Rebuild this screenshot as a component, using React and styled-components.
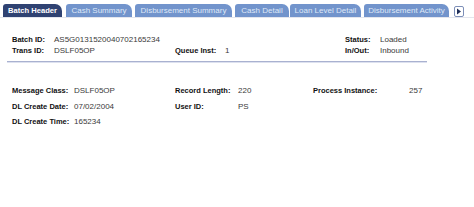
import React from "react";
import styled, { createGlobalStyle } from "styled-components";

const Global = createGlobalStyle`
  html, body { margin: 0; padding: 0; background: #ffffff; }
  body { font-family: "Liberation Sans", Arial, sans-serif; }
`;

const Page = styled.div`
  width: 474px;
  height: 207px;
  background: #fff;
  overflow: hidden;
`;

const TabBar = styled.div`
  display: flex;
  align-items: flex-end;
  padding: 4px 0 0 3px;
  height: 13px;
  border-bottom: 1px solid #e4e6ee;
`;

const Tab = styled.div`
  flex: none;
  width: ${(p) => p.$w}px;
  margin-right: ${(p) => p.$gap}px;
  height: 13px;
  box-sizing: border-box;
  display: flex;
  align-items: center;
  justify-content: center;
  border-radius: 3px 7px 0 0;
  background: ${(p) => (p.$active ? "#2f4272" : "#7294cc")};
  color: ${(p) => (p.$active ? "#ffffff" : "#dfe8f7")};
  font-size: ${(p) => (p.$active ? "7.6px" : "8px")};
  font-weight: ${(p) => (p.$active ? 700 : 400)};
  white-space: nowrap;
`;

const ArrowBtn = styled.div`
  flex: none;
  width: 10px;
  height: 11px;
  margin-left: 2px;
  box-sizing: border-box;
  border: 1px solid #7d8fb8;
  border-radius: 2px;
  background: #fff;
  display: flex;
  align-items: center;
  justify-content: center;
`;

const Grid = styled.div`
  display: grid;
  grid-template-columns: ${(p) => p.$cols};
  grid-template-rows: ${(p) => p.$rows};
  padding-left: 12px;
  align-items: center;
  margin-top: ${(p) => p.$top}px;
`;

const Label = styled.div`
  font-size: 7.5px;
  font-weight: 700;
  color: #111;
  white-space: nowrap;
`;

const Value = styled.div`
  font-size: 8px;
  color: #3a3a3a;
  white-space: nowrap;
`;

const Empty = styled.div``;

const Separator = styled.div`
  margin: 5px 0 0 7px;
  width: 420px;
  height: 1px;
  background: #a9b1d0;
  box-shadow: 0 1px 0 #dde1ef;
`;

const tabs = [
  ["Batch Header", 59, 4, true],
  ["Cash Summary", 66, 3],
  ["Disbursement Summary", 97, 3],
  ["Cash Detail", 54, 1],
  ["Loan Level Detail", 71, 3],
  ["Disbursement Activity", 85, 3],
];

export default function App() {
  return (
    <Page>
      <Global />
      <TabBar>
        {tabs.map(([t, w, g, a]) => (
          <Tab key={t} $w={w} $gap={g} $active={a}>
            {t}
          </Tab>
        ))}
        <ArrowBtn>
          <svg width="6" height="7" viewBox="0 0 6 7">
            <path d="M1 0.5 L5 3.5 L1 6.5 Z" fill="#1f2f5a" />
          </svg>
        </ArrowBtn>
      </TabBar>

      <Grid $cols="42px 121px 50px 120px 35px auto" $rows="11px 11px" $top={16}>
        <Label>Batch ID:</Label>
        <Value>AS5G0131520040702165234</Value>
        <Empty />
        <Empty />
        <Label>Status:</Label>
        <Value>Loaded</Value>
        <Label>Trans ID:</Label>
        <Value>DSLF05OP</Value>
        <Label>Queue Inst:</Label>
        <Value>1</Value>
        <Label>In/Out:</Label>
        <Value>Inbound</Value>
      </Grid>

      <Separator />

      <Grid $cols="62px 101px 63px 75px 96px auto" $rows="17px 15px 15px" $top={20}>
        <Label>Message Class:</Label>
        <Value>DSLF05OP</Value>
        <Label>Record Length:</Label>
        <Value>220</Value>
        <Label>Process Instance:</Label>
        <Value>257</Value>
        <Label>DL Create Date:</Label>
        <Value>07/02/2004</Value>
        <Label>User ID:</Label>
        <Value>PS</Value>
        <Empty />
        <Empty />
        <Label>DL Create Time:</Label>
        <Value>165234</Value>
      </Grid>
    </Page>
  );
}
